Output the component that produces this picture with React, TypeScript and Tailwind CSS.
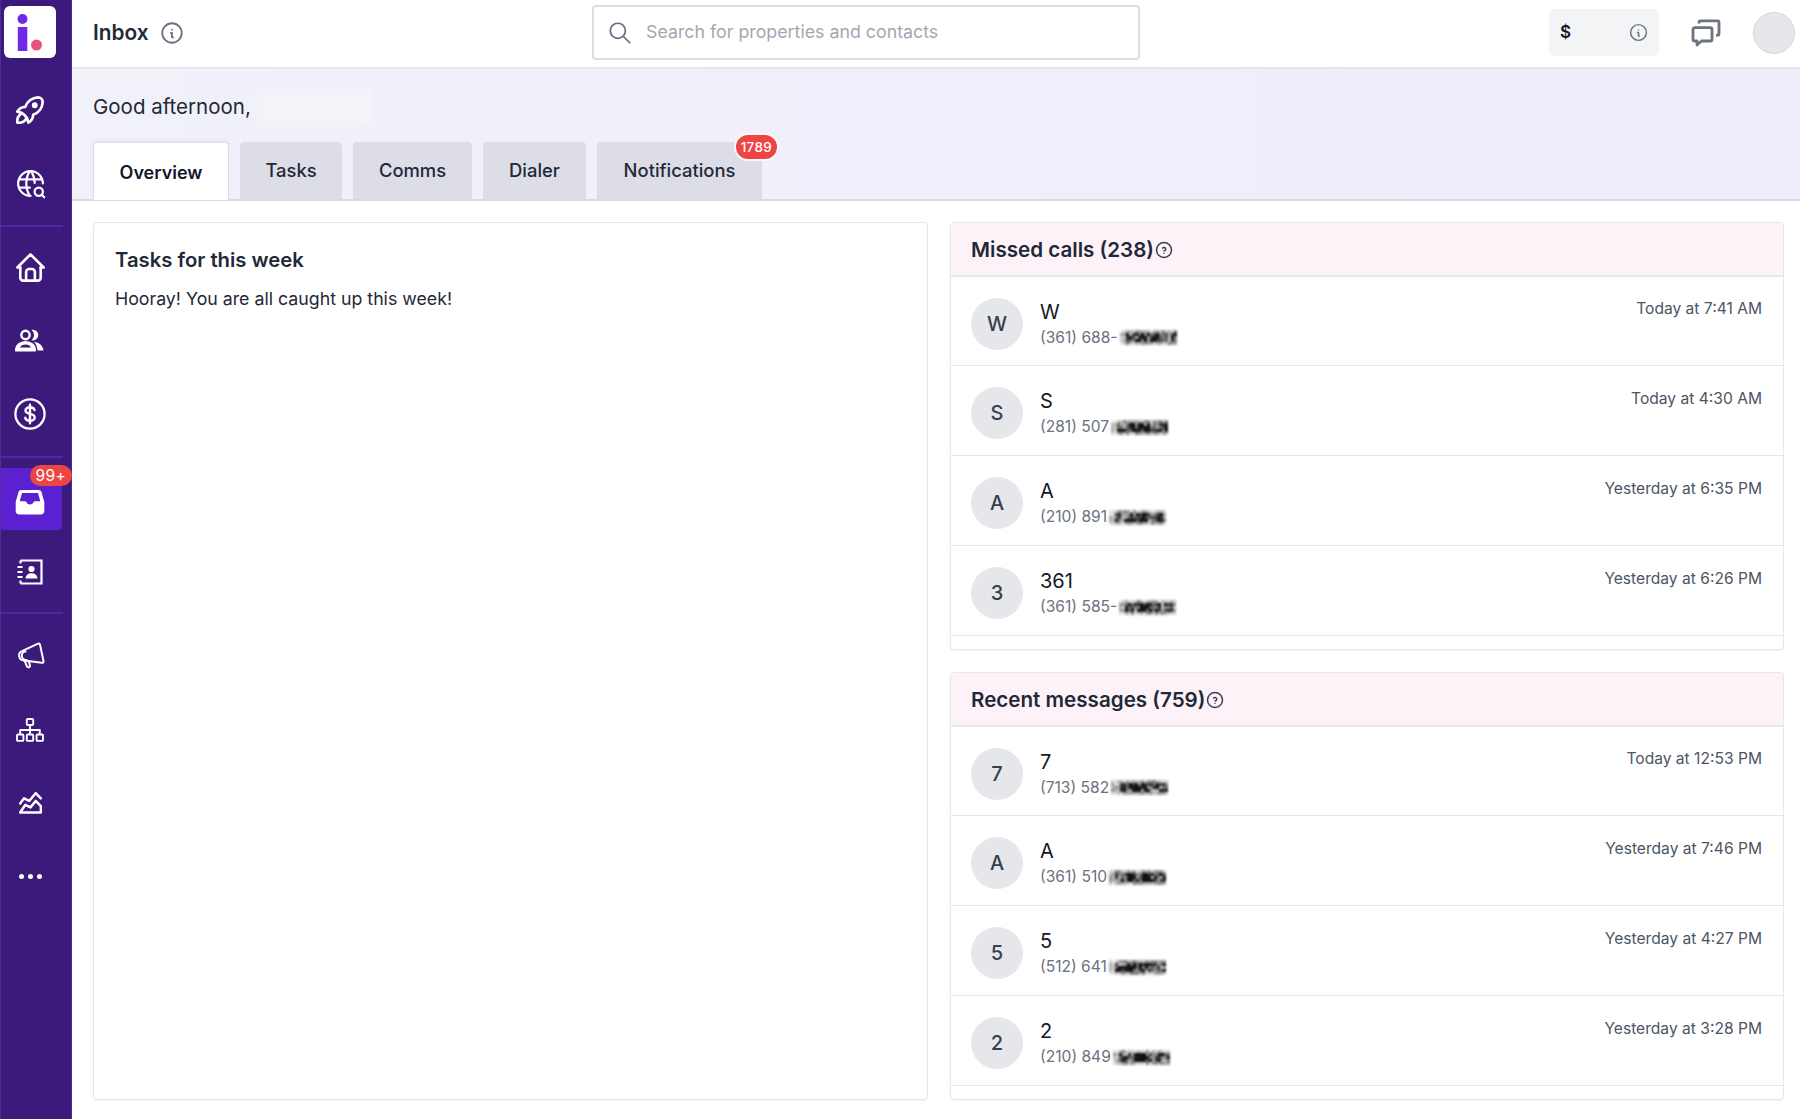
import React from "react";
import { TbRocket, TbWorldSearch, TbHome, TbChartAreaLine, TbInfoCircle, TbHelpCircle, TbSearch } from "react-icons/tb";

const FONT = "[font-family:Inter,'Liberation_Sans',sans-serif]";

function Divider() {
  return <div className="h-[2px] w-[62px] bg-[#4f27a0]" />;
}

function NavIcon({ children }: { children: React.ReactNode }) {
  return <div className="flex h-[73px] w-[58px] items-center justify-center text-white">{children}</div>;
}

function UsersIcon() {
  return (
    <svg width="30" height="24" viewBox="0 0 30 24" fill="none">
      <circle cx="10.500" cy="6" r="4.200" stroke="white" strokeWidth="2.400" />
      <path d="M18 1.500a4.600 4.600 0 0 1 0 9.200 7 7 0 0 0 0-9.200Z" fill="white" stroke="white" strokeWidth="1.400" />
      <path d="M1 21.500c0-5 4-8.500 9.500-8.500s9.500 3.500 9.500 8.500Z" stroke="white" strokeWidth="2.200" strokeLinejoin="round" fill="white" />
      <path d="M5 18.500c.8-1.800 3-2.900 5.500-2.900s4.700 1.100 5.500 2.900Z" fill="#3b1a7c" />
      <path d="M19 13c5 .2 9 3.600 9.500 8.500H22.500C22.300 18 21.200 15 19 13Z" fill="white" />
    </svg>
  );
}

function DollarIcon() {
  return (
    <svg width="32" height="32" viewBox="0 0 32 32" fill="none">
      <circle cx="16" cy="16" r="14.600" stroke="white" strokeWidth="2.300" />
      <path d="M20.500 12c-.5-1.800-2.300-2.800-4.500-2.800-2.600 0-4.500 1.300-4.500 3.300 0 4.500 9.200 2.300 9.200 6.900 0 2-2 3.400-4.700 3.400-2.400 0-4.300-1-4.800-3M16 6.800v18.400" stroke="white" strokeWidth="2.400" strokeLinecap="round" />
    </svg>
  );
}

function InboxIcon() {
  return (
    <svg width="30" height="26" viewBox="0 0 30 26" fill="white">
      <path fillRule="evenodd" d="M6.500 1h17c1.400 0 2.500.8 3 2L29.300 13v9c0 2-1.500 3.500-3.500 3.500H4.200C2.200 25.500.7 24 .7 22v-9L3.500 3c.5-1.200 1.600-2 3-2Zm.5 3-2.300 8.200h5c.8 0 1.500.4 1.800 1.100.7 1.500 2 2.200 3.500 2.200s2.800-.7 3.500-2.200c.3-.7 1-1.100 1.800-1.100h5L23 4Z" />
    </svg>
  );
}

function ContactsIcon() {
  return (
    <svg width="26" height="26" viewBox="0 0 26 26" fill="none">
      <path d="M3.500 1.500h21v23h-21" stroke="white" strokeWidth="2.200" />
      <path d="M3.500 1.500v3M3.500 21.500v3" stroke="white" strokeWidth="2.200" />
      <path d="M.5 8h5M.5 13h5M.5 18h5" stroke="white" strokeWidth="2" />
      <circle cx="14.500" cy="10" r="3.100" fill="white" />
      <path d="M8.500 19.500c.3-3.500 2.800-5.200 6-5.200s5.700 1.700 6 5.200Z" fill="white" />
    </svg>
  );
}

function MegaphoneIcon() {
  return (
    <svg width="29" height="27" viewBox="0 0 29 27" fill="none" stroke="white" strokeWidth="2" strokeLinejoin="round" strokeLinecap="round">
      <path d="M6 9.200 22 1.600c1-.4 1.800 0 2 1L27.500 19c.2 1.300-.5 2-1.700 1.800L8 18.400a4.800 4.800 0 0 1-2-9.200Z" />
      <path d="M9.500 9.500a4.200 4.200 0 0 0 1 8.400" />
      <path d="M8.500 18.500 11 24.500c.8 1.500 3.200.8 3-1l-1.300-4.500" />
    </svg>
  );
}

function SitemapIcon() {
  return (
    <svg width="28" height="24" viewBox="0 0 28 24" fill="none" stroke="white" strokeWidth="1.900" strokeLinejoin="round">
      <rect x="10.800" y="1" width="6.400" height="6" rx="1" />
      <rect x="1" y="16.500" width="6.400" height="6.400" rx="1" />
      <rect x="10.800" y="16.500" width="6.400" height="6.400" rx="1" />
      <rect x="20.600" y="16.500" width="6.400" height="6.400" rx="1" />
      <path d="M14 7v9.500M4.200 16.500v-4.500h19.600v4.500" />
    </svg>
  );
}

function ChatIcon() {
  return (
    <svg width="30" height="28" viewBox="0 0 30 28" fill="none" stroke="#6b7280" strokeWidth="2.800" strokeLinejoin="round">
      <path d="M2 10.500c0-1 .8-1.800 1.800-1.800h15.400c1 0 1.800.8 1.800 1.800v9.700c0 1-.8 1.800-1.800 1.800h-8.700L6 26v-4H3.800c-1 0-1.800-.8-1.800-1.800Z" />
      <path d="M8 4.500V3.300c0-.9.700-1.500 1.500-1.500h17c.9 0 1.500.6 1.500 1.500v11.400c0 .8-.6 1.500-1.500 1.500H25" />
    </svg>
  );
}

const hash = (i: number, s: number) => {
  const v = Math.sin(i * 12.9898 + s * 78.233) * 43758.5453;
  return v - Math.floor(v);
};

function Mosaic({ seed }: { seed: number }) {
  const cells = [];
  for (let y = 0; y < 5; y++) {
    for (let x = 0; x < 19; x++) {
      const edge = y === 0 || y === 4 ? 0.5 : 1;
      const middle = x > 5 && x < 13 && y > 0 && y < 4 ? 1.35 : 1;
      const o = Math.min(1, (0.25 + hash(x + y * 19, seed) * 0.85) * edge * middle * (x < 2 ? 0.45 : 1));
      cells.push(<rect key={`${x}-${y}`} x={x * 3} y={y * 3} width="3" height="3" fill="#111111" opacity={o} />);
    }
  }
  return (
    <svg width="57" height="15" viewBox="0 0 57 15" className="ml-[2px] blur-[0.8px]">
      {cells}
    </svg>
  );
}

type Row = { initial: string; name: string; phone: string; time: string };

const missed: Row[] = [
  { initial: "W", name: "W", phone: "(361) 688-", time: "Today at 7:41 AM" },
  { initial: "S", name: "S", phone: "(281) 507", time: "Today at 4:30 AM" },
  { initial: "A", name: "A", phone: "(210) 891", time: "Yesterday at 6:35 PM" },
  { initial: "3", name: "361", phone: "(361) 585-", time: "Yesterday at 6:26 PM" },
];
const messages: Row[] = [
  { initial: "7", name: "7", phone: "(713) 582", time: "Today at 12:53 PM" },
  { initial: "A", name: "A", phone: "(361) 510", time: "Yesterday at 7:46 PM" },
  { initial: "5", name: "5", phone: "(512) 641", time: "Yesterday at 4:27 PM" },
  { initial: "2", name: "2", phone: "(210) 849", time: "Yesterday at 3:28 PM" },
];

function ListCard({ title, rows, seed }: { title: string; rows: Row[]; seed: number }) {
  return (
    <section className="overflow-hidden rounded-[4px] border border-[#e5e7eb] bg-white pb-[13px] shadow-[0_1px_2px_rgba(0,0,0,0.05)]">
      <div className="flex h-[54px] items-center border-b-2 border-[#e7e7ee] bg-[#fdf2f8] pl-[20px] pt-[2px]">
        <h2 className="text-[20.6px] font-semibold leading-[28px] text-[#1f2937]">{title}</h2>
        <TbHelpCircle className="size-[20px] text-[#374151]" strokeWidth={1.800} />
      </div>
      {rows.map((r, i) => (
        <div key={i} className={`flex items-center border-b border-[#e5e7eb] pl-[20px] pr-[21px] pt-[5px] ${i === 0 ? "h-[89px]" : "h-[90px]"}`}>
          <div className="flex size-[52px] shrink-0 items-center justify-center rounded-full bg-[#e5e7eb] text-[20px] font-medium text-[#374151]">
            {r.initial}
          </div>
          <div className="ml-[17px] flex flex-col">
            <div className="text-[20px] leading-[28px] text-[#111827]">{r.name}</div>
            <div className="flex items-center text-[15.6px] leading-[24px] text-[#6b7280]">
              <span>{r.phone}</span>
              <Mosaic seed={seed + i} />
            </div>
          </div>
          <div className="mb-[29px] ml-auto text-[15.6px] leading-[24px] text-[#4b5563]">{r.time}</div>
        </div>
      ))}
    </section>
  );
}

function Tab({ label, w, active, badge }: { label: string; w: string; active?: boolean; badge?: string }) {
  return (
    <div
      className={
        active
          ? `relative z-10 -mb-px flex h-[58px] items-center justify-center rounded-t-[4px] border border-b-0 border-[#dcdce6] bg-white pt-[2px] text-[18px] font-semibold text-[#111827] shadow-[0_-2px_4px_rgba(0,0,0,0.05)] ${w}`
          : `relative flex h-[57px] items-center justify-center rounded-t-[4px] bg-[#dddde8] pt-[1px] text-[18.4px] font-medium text-[#1f2937] ${w}`
      }
    >
      {label}
      {badge && (
        <span className="absolute right-[-17px] top-[-9px] rounded-full border-2 border-[#f8f8fd] bg-[#ef4444] px-[5px] text-[13.5px] leading-[24px] tracking-[0.3px] text-white">
          {badge}
        </span>
      )}
    </div>
  );
}

export default function App() {
  return (
    <div className={`flex h-[1119px] w-[1800px] overflow-hidden bg-white antialiased ${FONT}`}>
      <aside className="flex w-[72px] shrink-0 flex-col items-start border-x border-x-[#4f2b9c] bg-[#3b1a7c]">
        <div className="ml-[3px] mt-[6px] flex size-[52px] items-start justify-center rounded-[6px] bg-white">
          <svg width="52" height="52" viewBox="0 0 52 52">
            <circle cx="18.500" cy="13" r="5" fill="#6d28e8" />
            <rect x="13.800" y="21" width="9.500" height="24" fill="#6d28e8" />
            <circle cx="32.500" cy="39" r="5.500" fill="#e6547e" />
          </svg>
        </div>
        <div className="mt-[15px]"><NavIcon><TbRocket size={38} strokeWidth={1.700} /></NavIcon></div>
        <div className="mt-[1px]"><NavIcon><TbWorldSearch size={33} strokeWidth={1.600} /></NavIcon></div>
        <div className="mt-[5px]"><Divider /></div>
        <div className="mt-[4px]"><NavIcon><TbHome size={35} strokeWidth={1.800} /></NavIcon></div>
        <NavIcon><UsersIcon /></NavIcon>
        <NavIcon><DollarIcon /></NavIcon>
        <div className="mt-[6px]"><Divider /></div>
        <div className="relative mt-[10px] flex h-[62px] w-[61px] items-center justify-center rounded-r-[4px] bg-[#5b21d0] pr-[3px]">
          <div className="mt-[6px]"><InboxIcon /></div>
          <span className="absolute right-[-10px] top-[-3px] rounded-full bg-[#ef4444] px-[6px] text-[15.5px] leading-[21px] tracking-[0.3px] text-white">99+</span>
        </div>
        <div className="mt-[5px]"><NavIcon><ContactsIcon /></NavIcon></div>
        <div className="mt-[4px]"><Divider /></div>
        <div className="mt-[5px]"><NavIcon><MegaphoneIcon /></NavIcon></div>
        <div className="mt-[1px]"><NavIcon><SitemapIcon /></NavIcon></div>
        <div className="mt-[1px]"><NavIcon><TbChartAreaLine size={31} strokeWidth={1.900} /></NavIcon></div>
        <div className="flex h-[72px] w-[58px] items-center justify-center gap-[4px]">
          <span className="size-[5px] rounded-full bg-white" />
          <span className="size-[5px] rounded-full bg-white" />
          <span className="size-[5px] rounded-full bg-white" />
        </div>
      </aside>

      <main className="flex min-w-0 flex-1 flex-col">
        <header className="flex h-[69px] shrink-0 items-center border-b-2 border-[#e6e6ee] bg-white pb-[2px]">
          <div className="flex w-[520px] items-center pl-[21px]">
            <span className="text-[20.8px] font-semibold text-[#1f2937]">Inbox</span>
            <TbInfoCircle className="ml-[10px] size-[26px] text-[#6b7280]" strokeWidth={1.700} />
          </div>
          <div className="flex h-[55px] w-[548px] items-center rounded-[4px] border-2 border-[#dcdce3] bg-white pl-[13px]">
            <TbSearch className="size-[26px] text-[#6b6b85]" strokeWidth={1.600} />
            <span className="ml-[13px] text-[17.8px] text-[#a3a7b2]">Search for properties and contacts</span>
          </div>
          <div className="flex flex-1 items-center justify-end pr-[5px]">
            <div className="flex h-[47px] w-[110px] items-center justify-between rounded-[6px] bg-[#f3f4f6] pl-[11px] pr-[10px]">
              <span className="text-[17px] font-semibold text-[#111827]">$</span>
              <TbInfoCircle className="size-[21px] text-[#6b7280]" strokeWidth={1.700} />
            </div>
            <div className="ml-[32px]"><ChatIcon /></div>
            <div className="ml-[32px] size-[42px] rounded-full border border-[#d5d7dc] bg-[#e5e7eb]" />
          </div>
        </header>

        <div className="flex h-[132px] shrink-0 flex-col justify-between bg-gradient-to-r from-[#f1f1fa] to-[#efecfb] pl-[21px] pr-[16px]">
          <div className="mt-[20px] flex items-center">
            <span className="text-[20.5px] leading-[28px] text-[#1f2937]">Good afternoon,</span>
            <span className="ml-[5px] h-[36px] w-[117px] rounded-[6px] bg-[#f3f3f9] blur-[3px]" />
          </div>
          <div className="-mx-[21px] -mr-[16px] flex items-end gap-[11px] border-b-2 border-[#d9d9e4] pl-[21px]">
            <Tab label="Overview" w="w-[136px]" active />
            <Tab label="Tasks" w="w-[102px]" />
            <Tab label="Comms" w="w-[119px]" />
            <Tab label="Dialer" w="w-[103px]" />
            <Tab label="Notifications" w="w-[165px]" badge="1789" />
          </div>
        </div>

        <div className="flex min-h-0 flex-1 gap-[22px] pb-[19px] pl-[21px] pr-[16px] pt-[21px]">
          <section className="w-[835px] shrink-0 rounded-[4px] border border-[#e5e7eb] bg-white pl-[21px] pt-[23px] shadow-[0_1px_2px_rgba(0,0,0,0.05)]">
            <h2 className="text-[20.3px] font-semibold leading-[28px] text-[#1f2937]">Tasks for this week</h2>
            <p className="mt-[11px] text-[17.75px] leading-[28px] text-[#1f2937]">Hooray! You are all caught up this week!</p>
          </section>
          <div className="flex min-w-0 flex-1 flex-col gap-[22px]">
            <ListCard title="Missed calls (238)" rows={missed} seed={1} />
            <ListCard title="Recent messages (759)" rows={messages} seed={9} />
          </div>
        </div>
      </main>
    </div>
  );
}
